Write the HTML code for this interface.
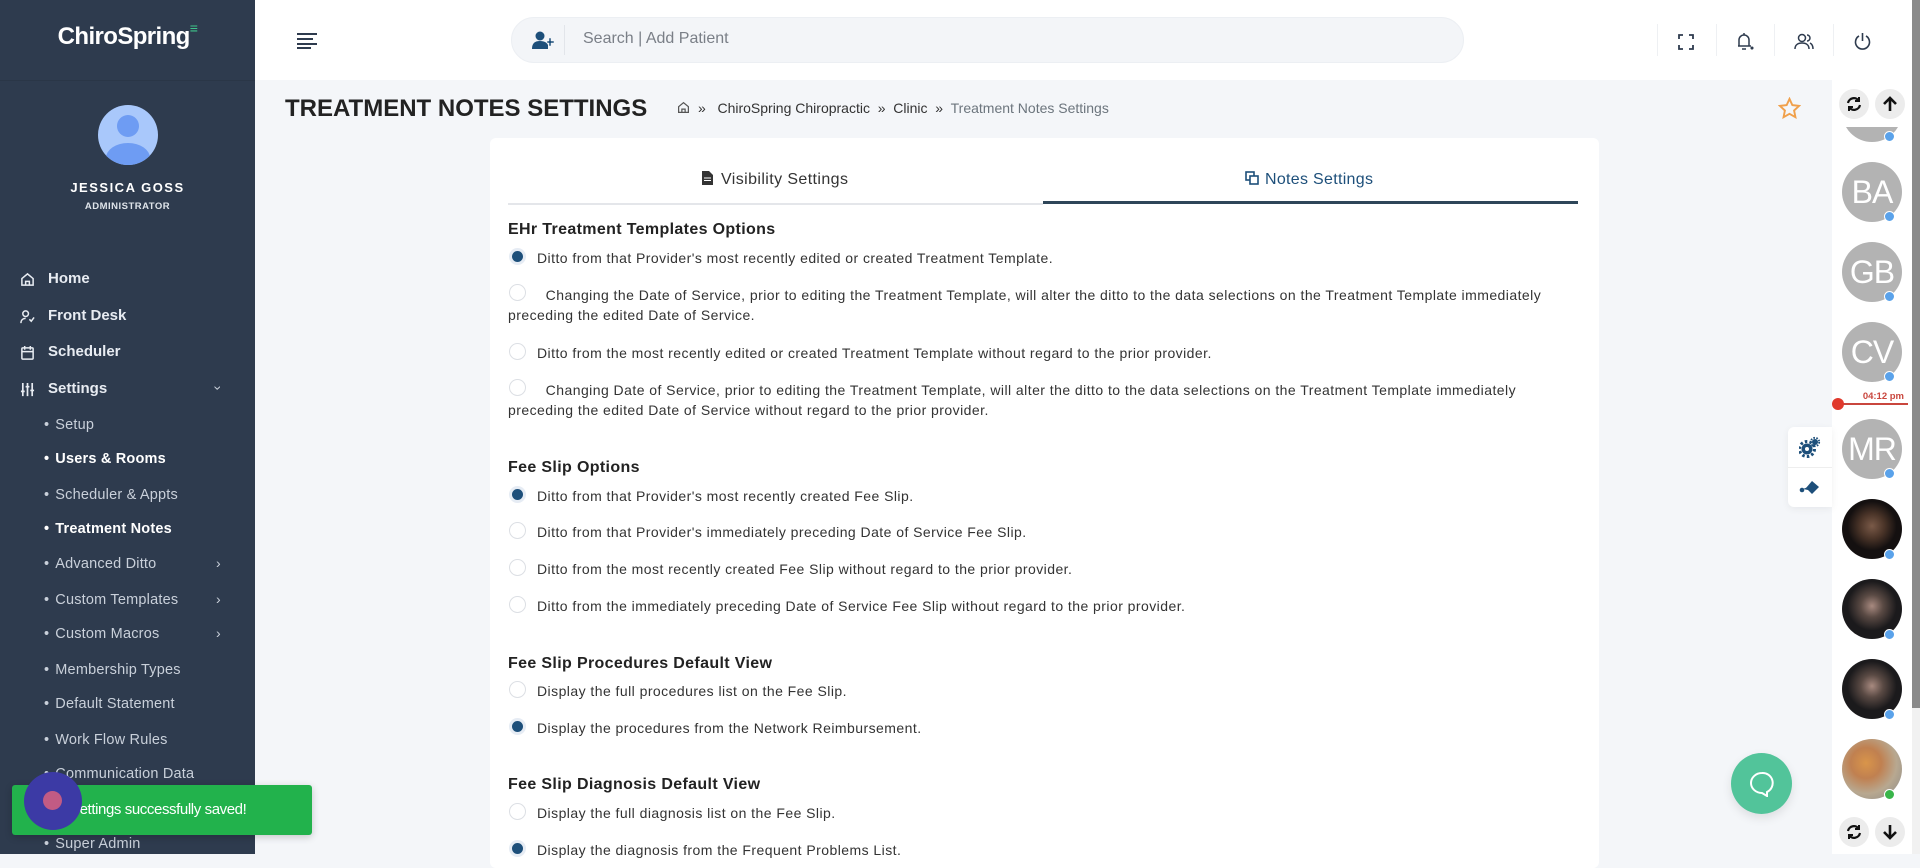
<!DOCTYPE html>
<html><head><meta charset="utf-8">
<style>
*{box-sizing:border-box;margin:0;padding:0}
body{width:1920px;height:854px;overflow:hidden;background:#f4f6f9;font-family:"Liberation Sans",Arial,sans-serif;position:relative}
.abs{position:absolute}
#side{left:0;top:0;width:255px;height:854px;background:#2e3b4e;color:#fff}
.logo{left:0;width:255px;top:23px;text-align:center;font-size:24px;font-weight:bold;letter-spacing:-0.6px;color:#fff}
.mi{left:48px;font-size:15px;font-weight:bold;color:#e8ecf2}
.ic{left:20px;width:15px;height:15px}
.si{left:44px;font-size:14.5px;color:#c9d0da;letter-spacing:0.2px}
.si.b{color:#fff;font-weight:bold}
.si:before{content:"•";margin-right:6px}
.chev{left:216px;color:#c9d0da;font-size:14px}
#hdr{left:255px;top:0;width:1665px;height:80px;background:#fff}
.hdiv{top:24px;width:1px;height:32px;background:#eef0f3}
.opt{left:537px;font-size:14px;color:#333;line-height:20px;letter-spacing:0.45px;white-space:nowrap}
.rad{left:509px;width:17px;height:17px;border-radius:50%;border:1px solid #dcdfe4;background:#fff}
.rad.on{background:#1d4f7a;border:3px solid #e6ecf4}
.h{left:508px;font-size:16px;font-weight:bold;color:#222;letter-spacing:0.35px}
.av{left:1842px;width:60px;height:60px;border-radius:50%;background:#b3b3b3;color:#fff;font-size:32px;text-align:center;line-height:60px;letter-spacing:-1px}
.dot{width:11px;height:11px;border-radius:50%;background:#5aa2ea;border:1px solid #fff}
.rb{width:30px;height:30px;border-radius:50%;background:#ececec}
.rb svg{position:absolute;left:7px;top:7px}
</style></head><body>
<div id="side" class="abs">
 <div class="abs logo">ChiroSpring<span style="color:#3ec48a;font-size:14px;position:relative;top:-11px;font-style:italic">≡</span></div>
 <div class="abs" style="left:0;top:80px;width:255px;height:1px;background:#2a3647"></div>
 <div class="abs" style="left:98px;top:105px;width:60px;height:60px;border-radius:50%;background:#a9c8fb;overflow:hidden">
  <div class="abs" style="left:19px;top:10px;width:22px;height:22px;border-radius:50%;background:#6e9cf3"></div>
  <div class="abs" style="left:8px;top:38px;width:44px;height:30px;border-radius:50% 50% 0 0;background:#6e9cf3"></div>
 </div>
 <div class="abs" style="left:0;width:255px;top:180px;text-align:center;font-size:13px;font-weight:bold;letter-spacing:1.5px">JESSICA GOSS</div>
 <div class="abs" style="left:0;width:255px;top:201px;text-align:center;font-size:9.5px;font-weight:bold;letter-spacing:0.5px;color:#dfe4ea">ADMINISTRATOR</div>
 <svg class="abs ic" style="top:272px" viewBox="0 0 16 16" fill="none" stroke="#e8ecf2" stroke-width="1.6"><path d="M2 7L8 2l6 5v7H2z M6 14v-4h4v4"/></svg>
 <div class="abs mi" style="top:270px">Home</div>
 <svg class="abs ic" style="top:309px" viewBox="0 0 16 16" fill="none" stroke="#e8ecf2" stroke-width="1.6"><circle cx="6" cy="5" r="3"/><path d="M1 15c0-4 3-5 5-5M10 11l2 2 3-4"/></svg>
 <div class="abs mi" style="top:307px">Front Desk</div>
 <svg class="abs ic" style="top:345px" viewBox="0 0 16 16" fill="none" stroke="#e8ecf2" stroke-width="1.6"><rect x="2" y="3" width="12" height="12" rx="1"/><path d="M2 7h12M5 1v4M11 1v4"/></svg>
 <div class="abs mi" style="top:343px">Scheduler</div>
 <svg class="abs ic" style="top:382px" viewBox="0 0 16 16" fill="none" stroke="#e8ecf2" stroke-width="1.8"><path d="M3 1v14M8 1v14M13 1v14M1 10h4M6 5h4M11 9h4"/></svg>
 <div class="abs mi" style="top:380px">Settings</div>
 <div class="abs chev" style="top:380px;transform:rotate(90deg)">›</div>
 <div class="abs si" style="top:417px">Setup</div>
 <div class="abs si b" style="top:451px">Users &amp; Rooms</div>
 <div class="abs si" style="top:487px">Scheduler &amp; Appts</div>
 <div class="abs si b" style="top:521px">Treatment Notes</div>
 <div class="abs si" style="top:556px">Advanced Ditto</div><div class="abs chev" style="top:555px">›</div>
 <div class="abs si" style="top:592px">Custom Templates</div><div class="abs chev" style="top:591px">›</div>
 <div class="abs si" style="top:626px">Custom Macros</div><div class="abs chev" style="top:625px">›</div>
 <div class="abs si" style="top:662px">Membership Types</div>
 <div class="abs si" style="top:696px">Default Statement</div>
 <div class="abs si" style="top:732px">Work Flow Rules</div>
 <div class="abs si" style="top:766px">Communication Data</div>
 <div class="abs si" style="top:836px">Super Admin</div>
</div>
<div id="hdr" class="abs">
 <svg class="abs" style="left:42px;top:33px" width="22" height="16" viewBox="0 0 22 16" fill="#2e3b4e"><rect y="0" width="20" height="2"/><rect y="5" width="16" height="2"/><rect y="10" width="20" height="2"/><rect y="14" width="14" height="2"/></svg>
 <div class="abs" style="left:256px;top:17px;width:953px;height:46px;border-radius:23px;background:#f3f5f8;border:1px solid #eceff3"></div>
 <svg class="abs" style="left:277px;top:31px" width="22" height="18" viewBox="0 0 22 18" fill="#1d4f7a"><circle cx="8" cy="5" r="4.5"/><path d="M0 18c0-6 3-8 8-8s7 2 8 4v4z"/><path d="M15 10h2v-3h2v3h3v2h-3v3h-2v-3h-2z" fill="#1d4f7a" stroke="#f3f5f8" stroke-width="0.5"/></svg>
 <div class="abs" style="left:309px;top:25px;width:1px;height:30px;background:#e2e5ea"></div>
 <div class="abs" style="left:328px;top:30px;font-size:16px;color:#7a7f87">Search | Add Patient</div>
 <div class="abs hdiv" style="left:1402px"></div><div class="abs hdiv" style="left:1461px"></div><div class="abs hdiv" style="left:1519px"></div><div class="abs hdiv" style="left:1578px"></div>
 <svg class="abs" style="left:1423px;top:34px" width="16" height="16" viewBox="0 0 16 16" fill="none" stroke="#2e3b4e" stroke-width="1.8"><path d="M1 5V1h4M11 1h4v4M15 11v4h-4M5 15H1v-4"/></svg>
 <svg class="abs" style="left:1481px;top:32px" width="18" height="19" viewBox="0 0 18 19" fill="none" stroke="#2e3b4e" stroke-width="1.5"><path d="M3 14V8a5 5 0 0110 0v6H2h13M6 17h4M8 1v2"/><circle cx="16" cy="16" r="0.8" fill="#2e3b4e"/></svg>
 <svg class="abs" style="left:1539px;top:33px" width="20" height="17" viewBox="0 0 20 17" fill="none" stroke="#2e3b4e" stroke-width="1.5"><circle cx="8" cy="5" r="3.5"/><path d="M1 16c0-4 3-6 7-6s7 2 7 6M13 2a3 3 0 010 6M16 10c2 1 3 3 3 6"/></svg>
 <svg class="abs" style="left:1599px;top:33px" width="17" height="17" viewBox="0 0 17 17" fill="none" stroke="#2e3b4e" stroke-width="1.6"><path d="M5 3a7 7 0 107 0M8.5 0v8"/></svg>
</div>
<div class="abs" style="left:285px;top:95px;font-size:24px;font-weight:bold;color:#222">TREATMENT NOTES SETTINGS</div>
<svg class="abs" style="left:677px;top:101px" width="13" height="13" viewBox="0 0 16 16" fill="none" stroke="#555" stroke-width="1.5"><path d="M2 7L8 2l6 5v7H2z M6 14v-4h4v4"/></svg>
<div class="abs" style="left:698px;top:100px;font-size:14px;color:#333">»&nbsp;&nbsp; ChiroSpring Chiropractic &nbsp;»&nbsp; Clinic &nbsp;»&nbsp; <span style="color:#6c757d">Treatment Notes Settings</span></div>
<svg class="abs" style="left:1778px;top:97px" width="23" height="22" viewBox="0 0 24 23" fill="none" stroke="#f0a04b" stroke-width="2"><path d="M12 2l3 6.5 7 .8-5.2 4.8 1.4 7L12 17.6 5.8 21.1l1.4-7L2 9.3l7-.8z"/></svg>
<div class="abs" style="left:490px;top:138px;width:1109px;height:730px;background:#fff;border-radius:6px"></div>
<svg class="abs" style="left:702px;top:171px" width="11" height="14" viewBox="0 0 11 14" fill="#333"><path d="M0 0h7l4 4v10H0z"/><path d="M2 7h7M2 9.5h7" stroke="#fff"/></svg>
<div class="abs" style="left:721px;top:171px;font-size:16px;color:#333;letter-spacing:0.4px">Visibility Settings</div>
<svg class="abs" style="left:1245px;top:171px" width="14" height="14" viewBox="0 0 14 14" fill="none" stroke="#1d4f7a" stroke-width="1.6"><rect x="1" y="1" width="8" height="8"/><rect x="5" y="5" width="8" height="8" fill="#fff"/></svg>
<div class="abs" style="left:1265px;top:171px;font-size:16px;color:#1d4f7a;letter-spacing:0.3px">Notes Settings</div>
<div class="abs" style="left:508px;top:203px;width:535px;height:2px;background:#e4e6ea"></div>
<div class="abs" style="left:1043px;top:201px;width:535px;height:3px;background:#2e4659"></div>

<div class="abs h" style="top:221px">EHr Treatment Templates Options</div>
<div class="abs rad on" style="top:248px"></div><div class="abs opt" style="top:248px">Ditto from that Provider's most recently edited or created Treatment Template.</div>
<div class="abs rad" style="top:284px"></div><div class="abs opt" style="top:285px">&nbsp; Changing the Date of Service, prior to editing the Treatment Template, will alter the ditto to the data selections on the Treatment Template immediately</div>
<div class="abs opt" style="top:305px;left:508px">preceding the edited Date of Service.</div>
<div class="abs rad" style="top:343px"></div><div class="abs opt" style="top:343px">Ditto from the most recently edited or created Treatment Template without regard to the prior provider.</div>
<div class="abs rad" style="top:379px"></div><div class="abs opt" style="top:380px">&nbsp; Changing Date of Service, prior to editing the Treatment Template, will alter the ditto to the data selections on the Treatment Template immediately</div>
<div class="abs opt" style="top:400px;left:508px">preceding the edited Date of Service without regard to the prior provider.</div>

<div class="abs h" style="top:459px">Fee Slip Options</div>
<div class="abs rad on" style="top:486px"></div><div class="abs opt" style="top:486px">Ditto from that Provider's most recently created Fee Slip.</div>
<div class="abs rad" style="top:522px"></div><div class="abs opt" style="top:522px">Ditto from that Provider's immediately preceding Date of Service Fee Slip.</div>
<div class="abs rad" style="top:559px"></div><div class="abs opt" style="top:559px">Ditto from the most recently created Fee Slip without regard to the prior provider.</div>
<div class="abs rad" style="top:596px"></div><div class="abs opt" style="top:596px">Ditto from the immediately preceding Date of Service Fee Slip without regard to the prior provider.</div>

<div class="abs h" style="top:655px">Fee Slip Procedures Default View</div>
<div class="abs rad" style="top:681px"></div><div class="abs opt" style="top:681px">Display the full procedures list on the Fee Slip.</div>
<div class="abs rad on" style="top:718px"></div><div class="abs opt" style="top:718px">Display the procedures from the Network Reimbursement.</div>

<div class="abs h" style="top:776px">Fee Slip Diagnosis Default View</div>
<div class="abs rad" style="top:803px"></div><div class="abs opt" style="top:803px">Display the full diagnosis list on the Fee Slip.</div>
<div class="abs rad on" style="top:840px"></div><div class="abs opt" style="top:840px">Display the diagnosis from the Frequent Problems List.</div>

<!-- right panel -->
<div class="abs" style="left:1832px;top:80px;width:80px;height:774px;background:#fff"></div>
<div class="abs" style="left:1912px;top:0;width:8px;height:708px;background:#8a8a8a"></div>
<div class="abs" style="left:1912px;top:708px;width:8px;height:146px;background:#f1f1f1"></div>
<div class="abs" style="left:1832px;top:127px;width:80px;height:690px;overflow:hidden">
 <div class="abs av" style="left:10px;top:-45px"></div><div class="abs dot" style="left:52px;top:4px"></div>
</div>
<div class="abs av" style="top:162px">BA</div><div class="abs dot" style="left:1884px;top:211px"></div>
<div class="abs av" style="top:242px">GB</div><div class="abs dot" style="left:1884px;top:291px"></div>
<div class="abs av" style="top:322px">CV</div><div class="abs dot" style="left:1884px;top:371px"></div>
<div class="abs" style="left:1838px;top:403px;width:70px;height:2px;background:#c9463d"></div>
<div class="abs" style="left:1832px;top:398px;width:12px;height:12px;border-radius:50%;background:#e0392c"></div>
<div class="abs" style="left:1860px;top:391px;width:44px;text-align:right;font-size:9.5px;font-weight:bold;color:#c9463d">04:12 pm</div>
<div class="abs av" style="top:419px">MR</div><div class="abs dot" style="left:1884px;top:468px"></div>
<div class="abs av" style="top:499px;background:radial-gradient(circle at 50% 45%,#7a5a48 0,#4a3428 28%,#141010 55%)"></div><div class="abs dot" style="left:1884px;top:549px"></div>
<div class="abs av" style="top:579px;background:radial-gradient(circle at 50% 45%,#a88a80 0,#5a4a44 25%,#1b1a1c 55%)"></div><div class="abs dot" style="left:1884px;top:629px"></div>
<div class="abs av" style="top:659px;background:radial-gradient(circle at 50% 45%,#a88a80 0,#5a4a44 25%,#1b1a1c 55%)"></div><div class="abs dot" style="left:1884px;top:709px"></div>
<div class="abs av" style="top:739px;background:radial-gradient(circle at 40% 40%,#d9954a 0,#c08050 30%,#b8a890 60%,#888 100%)"></div><div class="abs dot" style="left:1884px;top:789px;background:#39b54a"></div>
<div class="abs rb" style="left:1839px;top:89px"><svg width="16" height="16" viewBox="0 0 16 16" fill="none" stroke="#111" stroke-width="2.2"><path d="M2 7a6 6 0 0111-2M14 9a6 6 0 01-11 2"/><path d="M13 1v4H9M3 15v-4h4" stroke-width="2"/></svg></div>
<div class="abs rb" style="left:1875px;top:89px"><svg width="16" height="16" viewBox="0 0 16 16" fill="none" stroke="#111" stroke-width="2.6"><path d="M8 15V2M2 8l6-6 6 6"/></svg></div>
<div class="abs rb" style="left:1839px;top:817px"><svg width="16" height="16" viewBox="0 0 16 16" fill="none" stroke="#111" stroke-width="2.2"><path d="M2 7a6 6 0 0111-2M14 9a6 6 0 01-11 2"/><path d="M13 1v4H9M3 15v-4h4" stroke-width="2"/></svg></div>
<div class="abs rb" style="left:1875px;top:817px"><svg width="16" height="16" viewBox="0 0 16 16" fill="none" stroke="#111" stroke-width="2.6"><path d="M8 1v13M2 8l6 6 6-6"/></svg></div>
<!-- floating widget -->
<div class="abs" style="left:1788px;top:427px;width:44px;height:80px;background:#fff;border-radius:6px 0 0 6px;box-shadow:0 2px 8px rgba(0,0,0,.06)"></div>
<div class="abs" style="left:1788px;top:467px;width:44px;height:1px;background:#eee"></div>
<svg class="abs" style="left:1799px;top:436px" width="22" height="22" viewBox="0 0 22 22"><circle cx="8" cy="13" r="5.5" fill="#1d4f7a"/><circle cx="8" cy="13" r="7.5" fill="none" stroke="#1d4f7a" stroke-width="3" stroke-dasharray="2.5 2.2"/><circle cx="8" cy="13" r="2" fill="#fff"/><circle cx="16" cy="6" r="3" fill="#1d4f7a"/><circle cx="16" cy="6" r="4.2" fill="none" stroke="#1d4f7a" stroke-width="1.8" stroke-dasharray="1.6 1.4"/></svg>
<svg class="abs" style="left:1799px;top:480px" width="22" height="16" viewBox="0 0 22 16" fill="#1d4f7a"><path d="M13 1l7 6-7 7-6-6z"/><path d="M4 9l5-2v3z"/><circle cx="3" cy="10" r="2.3"/></svg>
<!-- chat -->
<div class="abs" style="left:1731px;top:753px;width:61px;height:61px;border-radius:50%;background:#52c49a;box-shadow:0 4px 10px rgba(0,0,0,.1)"></div>
<svg class="abs" style="left:1749px;top:771px" width="26" height="26" viewBox="0 0 26 26" fill="none" stroke="#fff" stroke-width="2"><path d="M13 2a11 10 0 100 20l5 3v-4a10 10 0 00-5-19z"/></svg>
<!-- toast -->
<div class="abs" style="left:12px;top:785px;width:300px;height:50px;background:#22b24c;border-radius:3px;box-shadow:0 2px 8px rgba(0,0,0,.2)"></div>
<div class="abs" style="left:70px;top:801px;font-size:15px;color:#fff;letter-spacing:-0.4px">Settings successfully saved!</div>
<div class="abs" style="left:24px;top:772px;width:58px;height:58px;border-radius:50%;background:#3c3aa5"></div>
<div class="abs" style="left:43px;top:791px;width:19px;height:19px;border-radius:50%;background:#c25b84"></div>
</body></html>
